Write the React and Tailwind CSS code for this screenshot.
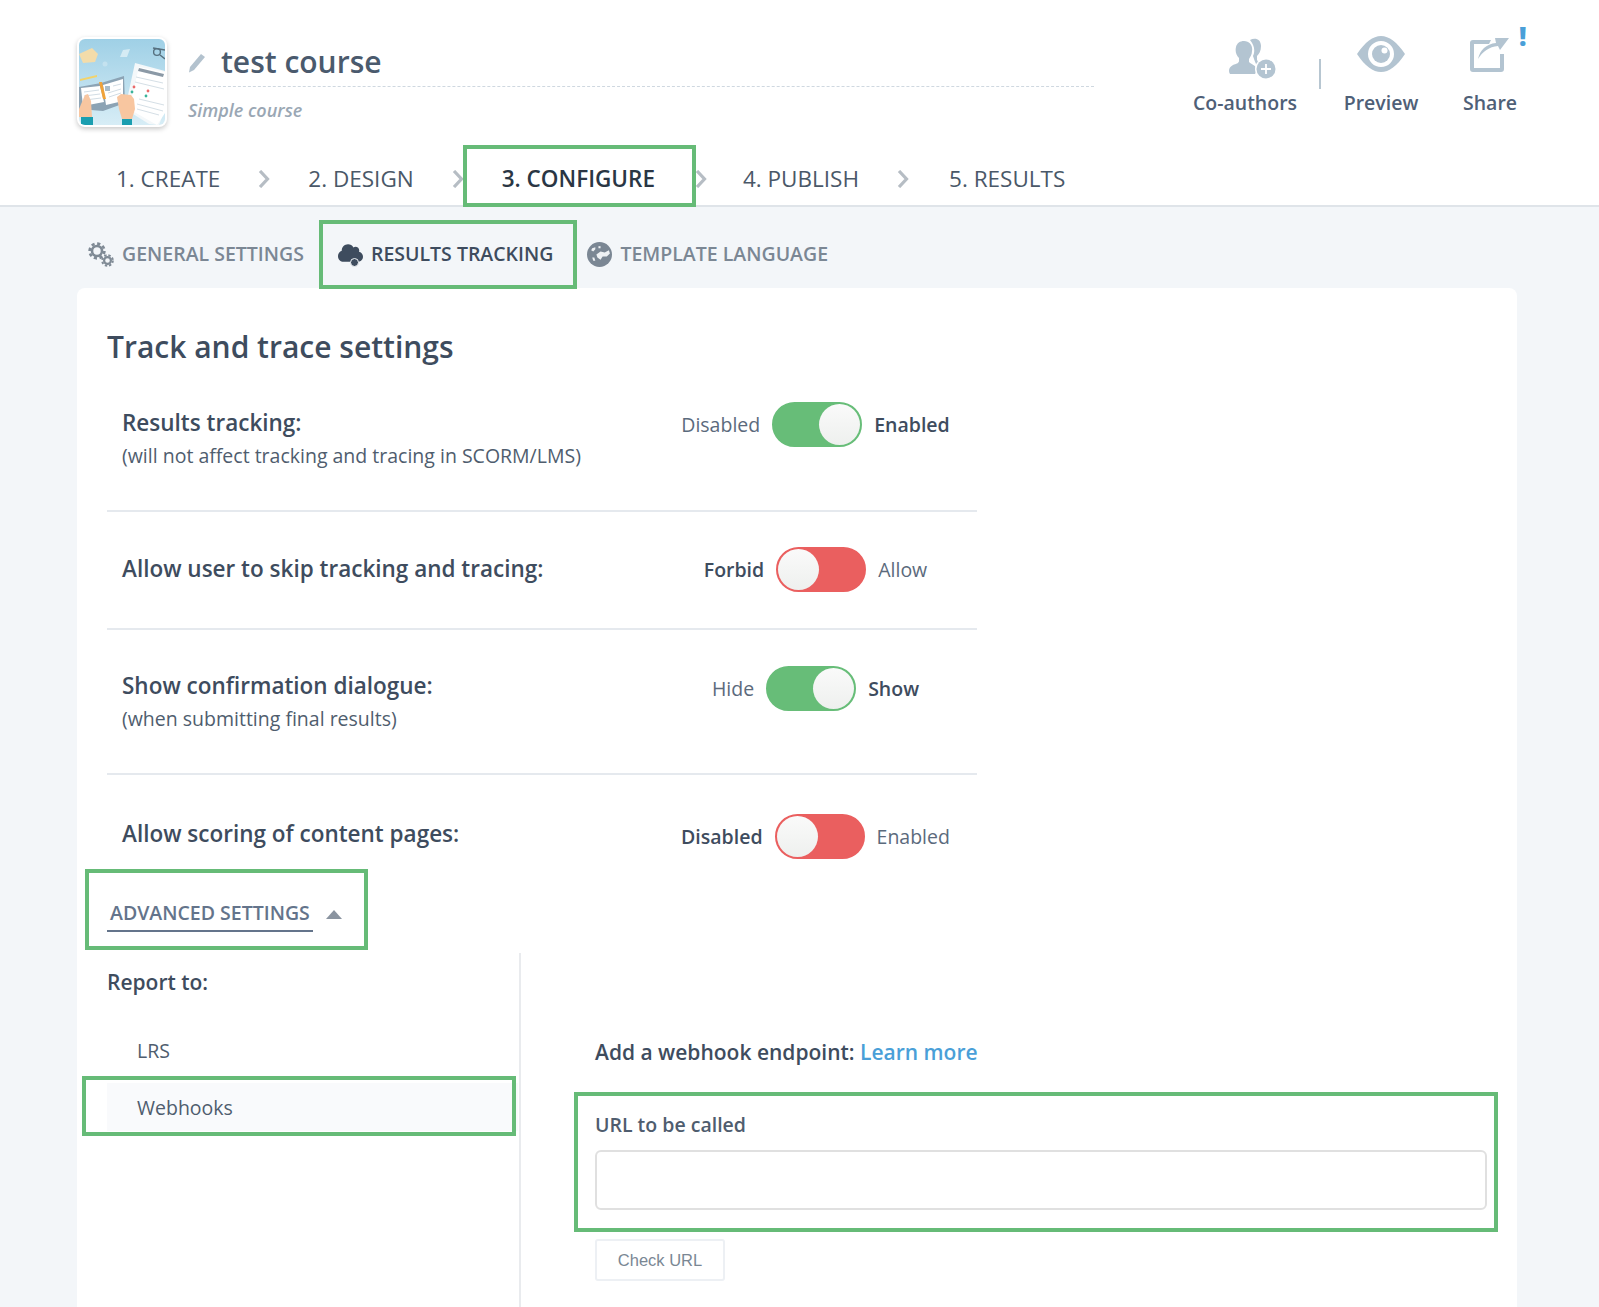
import React from 'react';
import { FaCloud } from 'react-icons/fa';

const Box = ({ className }) => <div className={`absolute border-4 border-[#66bb77] pointer-events-none ${className}`} />;

const Thumb = () => (
  <svg viewBox="0 0 86 86" className="w-full h-full block rounded-md">
    <defs>
      <linearGradient id="sky" x1="0" y1="0" x2="0" y2="1">
        <stop offset="0" stopColor="#9fd0e6" />
        <stop offset="1" stopColor="#d7edf6" />
      </linearGradient>
    </defs>
    <rect width="86" height="86" fill="url(#sky)" />
    <polygon points="0,15 13,9 19,15 16,23 4,24" fill="#f3dcaa" />
    <polygon points="41,18 44,11 51,10 48,18" fill="#d5ebf4" />
    <circle cx="26" cy="25" r="2.5" fill="#c4e2ef" />
    <g fill="none" stroke="#56707f" strokeWidth="1.4">
      <circle cx="78" cy="13" r="3.4" />
      <path d="M81 16 L86 20" />
      <path d="M74 9 L86 11" />
    </g>
    <polygon points="56,24 86,32 86,70 80,86 70,85 46,70" fill="#f4f8fa" />
    <polygon points="60,28 86,33 86,74 78,86 50,70" fill="#ffffff" />
    <polygon points="60,29 85,35 84,38 59,32" fill="#8b99a6" />
    <g stroke="#d5dfe6" strokeWidth="1">
      <path d="M57 38 L84 44" />
      <path d="M56 43 L85 50" />
      <path d="M60 60 L85 66" />
      <path d="M58 65 L84 72" />
      <path d="M58 70 L80 76" />
    </g>
    <circle cx="55" cy="48" r="1.4" fill="#ea6a6a" />
    <circle cx="69" cy="52" r="1.4" fill="#ea6a6a" />
    <circle cx="53" cy="53" r="1.4" fill="#3bb39a" />
    <circle cx="67" cy="57" r="1.4" fill="#3bb39a" />
    <polygon points="1,40 18,36 18,38 1,42" fill="#f2d36b" />
    <polygon points="0,48 22,44 45,37 46,64 24,72 0,70" fill="#8ca3b4" />
    <polygon points="2,49 21,47 25,63 4,67" fill="#ffffff" />
    <polygon points="24,46 44,40 44,62 27,66" fill="#ffffff" />
    <g stroke="#c5d3dd" strokeWidth="0.8">
      <path d="M5 53 L20 51" />
      <path d="M5 57 L21 55" />
      <path d="M6 61 L22 59" />
      <path d="M34 47 L42 45" />
      <path d="M29 54 L42 50" />
      <path d="M30 58 L42 54" />
    </g>
    <rect x="26" y="47" width="5" height="5" fill="#a9bdcb" />
    <polygon points="20,43 23,43 27,60 24,60" fill="#f0a33a" />
    <path d="M0 70 L6 56 L9 55 L12 62 L13 78 L0 78 Z" fill="#f8c6a0" />
    <path d="M38 58 L42 55 L52 56 L55 60 L56 70 L53 80 L43 80 L40 70 Z" fill="#f8c6a0" />
    <rect x="2" y="78" width="12" height="8" fill="#1a9eb0" />
    <rect x="43" y="80" width="10" height="6" fill="#1a9eb0" />
  </svg>
);

const Pencil = () => (
  <svg viewBox="0 0 18 20" className="w-[18px] h-[20px]">
    <path d="M13 1 L17 4 L6 17 L1 19.5 L2 14 Z" fill="#b3c2ce" />
  </svg>
);

const CoAuthors = () => (
  <svg viewBox="0 0 48 41" className="w-[48px] h-[41px]">
    <path d="M21 2 C26 -1 32 1 32 8 C32 13 30 16 28 18 L28 22 C30 25 30 26 28 28 C26 24 25 21 24 18 C26 14 26 8 21 2 Z" fill="#b3c4d1" />
    <path d="M15 3 C21 3 24 8 23 13 C23 17 21 19 20 21 L20 24 C23 27 27 27 28 32 L26 36 L1 36 C-1 33 0 29 4 27 C7 26 10 25 10 23 L10 20 C7 17 6 13 7 9 C8 5 11 3 15 3 Z" fill="#b3c4d1" />
    <circle cx="37" cy="31" r="11" fill="#ffffff" />
    <circle cx="37" cy="31" r="9.5" fill="#b3c4d1" />
    <path d="M37 26 V36 M32 31 H42" stroke="#ffffff" strokeWidth="1.8" />
  </svg>
);

const Eye = () => (
  <svg viewBox="0 0 48 36" className="w-[48px] h-[36px]">
    <path fillRule="evenodd" d="M0 18 C8 6 16 0 24 0 C32 0 40 6 48 18 C40 30 32 36 24 36 C16 36 8 30 0 18 Z M24 5 A13 13 0 1 0 24 31 A13 13 0 1 0 24 5 Z" fill="#b3c4d1" />
    <circle cx="24" cy="18" r="9" fill="#b3c4d1" />
    <circle cx="27.5" cy="14.5" r="3" fill="#ffffff" />
  </svg>
);

const Share = () => (
  <svg viewBox="0 0 40 37" className="w-[40px] h-[37px]">
    <path d="M22 5 H4 Q1 5 1 8 V34 Q1 37 4 37 H32 Q35 37 35 34 V19 H31 V33 H5 V9 H20 Z" fill="#b3c4d1" />
    <path d="M9 24 C11 15 17 9 27 8 L26 3 L40 3 L31 15 L29 11 C20 12 14 16 9 24 Z" fill="#b3c4d1" />
  </svg>
);

const Gears = () => (
  <svg viewBox="0 0 26 25" className="w-[26px] h-[25px]" fill="none" stroke="#7f8a95">
    <circle cx="9" cy="9" r="5" strokeWidth="2.6" />
    <circle cx="9" cy="9" r="7.4" strokeWidth="2.6" strokeDasharray="3.2 2.6" />
    <circle cx="19.5" cy="18.5" r="3.4" strokeWidth="2.2" />
    <circle cx="19.5" cy="18.5" r="5.3" strokeWidth="2" strokeDasharray="2.4 1.8" />
  </svg>
);

const Globe = () => (
  <svg viewBox="0 0 24 24" className="ml-[34px] w-[25px] h-[25px]">
    <circle cx="12" cy="12" r="12" fill="#7b8794" />
    <path d="M9 12 L13 9 L17 10 L21 8 L22 11 L19 14 L15 14 L13 17 L10 15 Z" fill="#eef1f4" />
    <path d="M5 6 L8 5 L8 7 L6 9 L4 8 Z" fill="#eef1f4" />
    <path d="M5 15 L7 15 L8 18 L6 18 Z" fill="#eef1f4" />
    <path d="M11 4 L13 4 L13 6 L11 6 Z" fill="#eef1f4" />
  </svg>
);

const Chevron = () => (
  <svg viewBox="0 0 12 18" className="w-[12px] h-[18px] shrink-0">
    <path d="M2 1 L9.5 9 L2 17" fill="none" stroke="#b6bdc4" strokeWidth="3.2" />
  </svg>
);

const Toggle = ({ on, color }) => (
  <div className={`w-[90px] h-[45px] rounded-full flex border-2 ${on ? 'justify-end' : 'justify-start'} ${color === 'green' ? 'bg-[#67bd78] border-[#67bd78]' : 'bg-[#ea5f5f] border-[#ea5f5f]'}`}>
    <div className="w-[41px] h-[41px] rounded-full bg-gradient-to-b from-[#fafafa] to-[#eef0ee]" />
  </div>
);

const ToggleGroup = ({ left, right, on, color, top }) => (
  <div className={`w-[322px] pr-[1px] flex justify-center ${top}`}>
    <div className="flex items-center gap-[12px] h-[45px] text-[19.5px]">
      <span className={on ? 'text-[#5b6a7c]' : 'font-semibold text-[#3e4c5e]'}>{left}</span>
      <Toggle on={on} color={color} />
      <span className={on ? 'font-semibold text-[#3e4c5e]' : 'text-[#5b6a7c]'}>{right}</span>
    </div>
  </div>
);

const Row = ({ title, sub, left, right, on, color, height, textTop, toggleTop, border = true }) => (
  <div className={`flex justify-between pl-[15px] ${height} ${border ? 'border-b-2 border-[#e5e9ee]' : ''}`}>
    <div className={textTop}>
      <div className="text-[22.5px] leading-[30px] font-semibold text-[#3e4c5e]">{title}</div>
      {sub && <div className="text-[19.5px] leading-[28px] mt-[4px] text-[#4f5d6e]">{sub}</div>}
    </div>
    <ToggleGroup left={left} right={right} on={on} color={color} top={toggleTop} />
  </div>
);

export default function App() {
  return (
    <div className="w-[1599px] min-h-[1307px] flex flex-col bg-[#f3f6f9] font-['Open_Sans',sans-serif] overflow-hidden">
      <header className="bg-white border-b-2 border-[#dfe4e9] h-[207px] pl-[77px]">
        <div className="flex h-[145px] pt-[37px]">
          <div className="w-[90px] h-[90px] rounded-lg bg-white p-[2px] shadow-[0_2px_5px_rgba(0,0,0,0.22)]">
            <Thumb />
          </div>
          <div className="ml-[21px] w-[906px]">
            <div className="flex items-center h-[50px] border-b border-dashed border-[#cfd8e0] pt-[2px]">
              <Pencil />
              <span className="ml-[15px] -mt-[2px] text-[30px] font-semibold leading-[40px] text-[#4a5a6d]">test course</span>
            </div>
            <div className="mt-[11px] text-[18px] italic font-semibold leading-[24px] text-[#9aa7b4]">Simple course</div>
          </div>
          <div className="flex ml-[99px] text-[19.5px] font-semibold text-[#4f6077]">
            <div className="w-[104px] flex flex-col items-center">
              <div className="h-[42px] pt-[1px] pl-[15px]"><CoAuthors /></div>
              <div className="mt-[10px] leading-[28px] whitespace-nowrap">Co-authors</div>
            </div>
            <div className="w-[2px] h-[30px] mt-[22px] ml-[22px] bg-[#b7c6d1]" />
            <div className="ml-[23px] w-[74px] flex flex-col items-center">
              <div className="h-[42px] -mt-[1px]"><Eye /></div>
              <div className="mt-[11px] leading-[28px]">Preview</div>
            </div>
            <div className="relative ml-[45px] w-[54px] flex flex-col items-start">
              <div className="h-[42px] -mt-[2px] pl-[6px]"><Share /></div>
              <div className="mt-[12px] leading-[28px]">Share</div>
              <span className="absolute left-[56px] -top-[16px] text-[26px] leading-[30px] font-extrabold text-[#4a9fd8]">!</span>
            </div>
          </div>
        </div>
        <nav className="flex items-center h-[60px] pt-[8px] text-[22.5px] text-[#4a5868] pl-[39px]">
          <span>1. CREATE</span>
          <span className="ml-[38px]"><Chevron /></span>
          <span className="ml-[38px]">2. DESIGN</span>
          <span className="ml-[38px]"><Chevron /></span>
          <div className="relative ml-[38px] text-[22.5px] text-[#2a3644] font-semibold">
            3. CONFIGURE
            <Box className="-left-[39px] -right-[41px] -top-[17px] -bottom-[11px]" />
          </div>
          <span className="ml-[40px]"><Chevron /></span>
          <span className="ml-[36px]">4. PUBLISH</span>
          <span className="ml-[38px]"><Chevron /></span>
          <span className="ml-[40px]">5. RESULTS</span>
        </nav>
      </header>

      <div className="flex items-center h-[81px] pt-[13px] pl-[88px] text-[19.5px] font-semibold text-[#7b8794]">
        <Gears />
        <span className="ml-[8px]">GENERAL SETTINGS</span>
        <div className="relative ml-[34px] flex items-center text-[#3e4c5e]">
          <span className="relative w-[25px] h-[22px]">
            <FaCloud className="w-[25px] h-[20px] text-[#3e4c5e]" />
            <span className="absolute right-[4px] -bottom-[2px] w-[9px] h-[9px] rounded-full bg-[#3e4c5e] border border-[#f3f6f9]" />
          </span>
          <span className="ml-[8px]">RESULTS TRACKING</span>
          <Box className="-left-[19px] -right-[24px] -top-[19px] -bottom-[20px]" />
        </div>
        <Globe />
        <span className="ml-[8px]">TEMPLATE LANGUAGE</span>
      </div>

      <main className="flex-1 ml-[77px] w-[1440px] bg-white rounded-t-lg">
        <div className="pl-[30px]">
          <h1 className="pt-[40px] h-[104px] text-[30px] leading-[38px] font-semibold text-[#3e4c5e]">Track and trace settings</h1>
          <div className="w-[870px]">
            <Row title="Results tracking:" sub="(will not affect tracking and tracing in SCORM/LMS)" left="Disabled" right="Enabled" on color="green" height="h-[120px]" textTop="pt-[16px]" toggleTop="pt-[10px]" />
            <Row title="Allow user to skip tracking and tracing:" left="Forbid" right="Allow" on={false} color="red" height="h-[118px]" textTop="pt-[42px]" toggleTop="pt-[35px]" />
            <Row title="Show confirmation dialogue:" sub="(when submitting final results)" left="Hide" right="Show" on color="green" height="h-[145px]" textTop="pt-[41px]" toggleTop="pt-[36px]" />
            <Row title="Allow scoring of content pages:" left="Disabled" right="Enabled" on={false} color="red" height="h-[94px]" textTop="pt-[44px]" toggleTop="pt-[39px]" border={false} />
          </div>
        </div>

        <div className="ml-[8px] w-[283px] h-[81px] border-4 border-[#66bb77] pl-[18px] pt-[24px] flex items-start text-[19.5px] text-[#64748b]">
          <span className="border-b-2 border-[#64748b] px-[3px] leading-[31px] h-[35px] font-semibold">ADVANCED SETTINGS</span>
          <span className="ml-[13px] mt-[13px] w-0 h-0 border-l-[8px] border-r-[8px] border-b-[9px] border-l-transparent border-r-transparent border-b-[#8a94a0]" />
        </div>

        <div className="flex">
          <div className="w-[444px] mt-[3px] border-r-2 border-[#e9ebee] min-h-[354px] pl-[30px]">
            <div className="pt-[13px] text-[21px] leading-[32px] font-semibold text-[#3e4c5e]">Report to:</div>
            <div className="mt-[37px] pl-[30px] text-[19.5px] leading-[32px] text-[#4f5d6e]">LRS</div>
            <div className="relative mt-[16px] h-[48px] bg-[#f9fafc] pl-[30px] pt-[2px] mr-[1px] flex items-center text-[19.5px] text-[#4f5d6e]">
              Webhooks
              <Box className="-left-[25px] right-[2px] -top-[7px] -bottom-[5px]" />
            </div>
          </div>
          <div className="flex-1 pl-[53px] pt-[87px]">
            <div className="pl-[21px] text-[21px] leading-[30px] font-semibold text-[#3e4c5e]">
              Add a webhook endpoint: <a className="text-[#4a9fd8]">Learn more</a>
            </div>
            <div className="mt-[25px] w-[924px] h-[140px] border-4 border-[#66bb77] pl-[17px] pr-[7px] pt-[15px]">
              <div className="text-[19.5px] leading-[28px] font-semibold text-[#4f5d6e]">URL to be called</div>
              <div className="mt-[11px] h-[60px] rounded-md border-2 border-[#e0e0e0] bg-white" />
            </div>
            <button className="ml-[21px] mt-[7px] w-[130px] h-[42px] rounded-[3px] border-2 border-[#edf0f4] bg-white font-['Liberation_Sans',sans-serif] text-[16.5px] text-[#7a8794]">Check URL</button>
          </div>
        </div>
      </main>
    </div>
  );
}
